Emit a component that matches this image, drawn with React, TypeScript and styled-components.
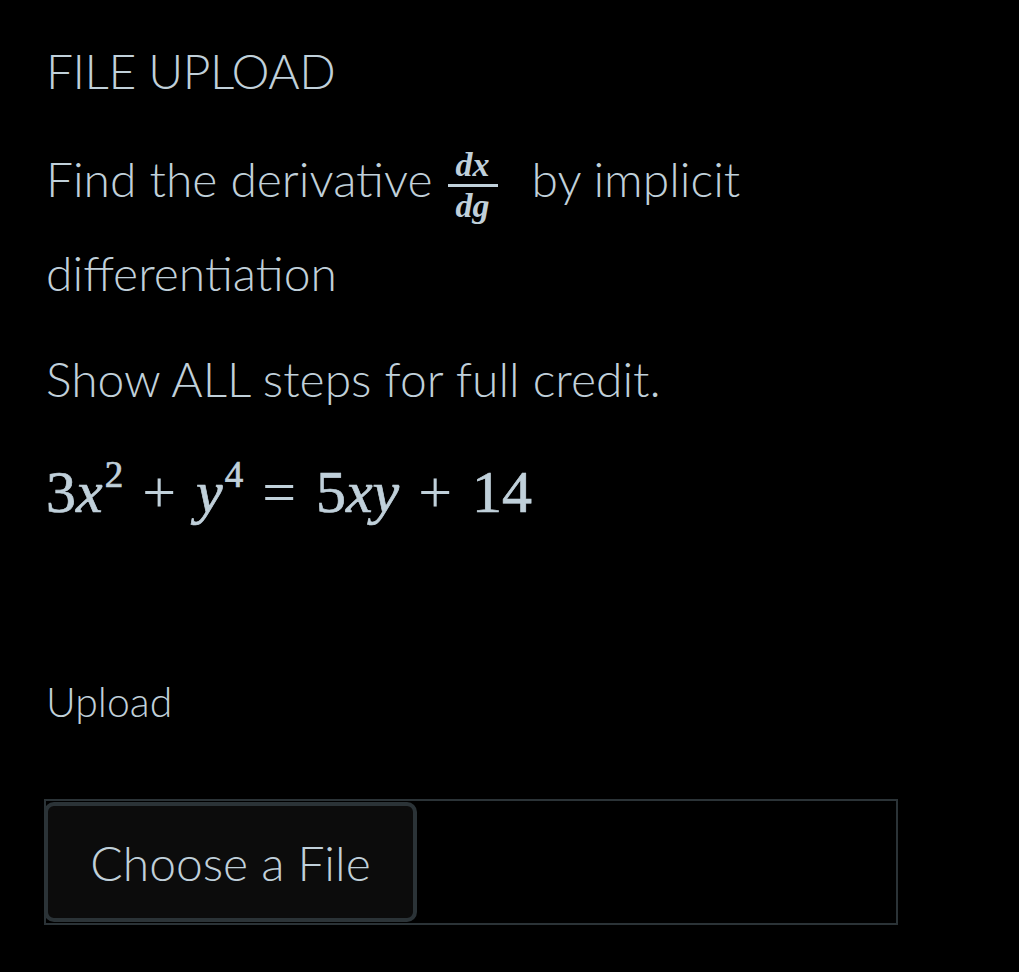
import styled, { createGlobalStyle } from "styled-components";

const GlobalStyle = createGlobalStyle`
  html, body {
    margin: 0;
    background: #000;
  }
  body {
    font-family: "Lato Light", "Lato", "Noto Sans", sans-serif;
    font-weight: 300;
    color: #c0d0da;
  }
`;

const Page = styled.div`
  width: 1019px;
  min-height: 972px;
  padding: 38px 0 0 46px;
  box-sizing: border-box;
`;

const Heading = styled.h2`
  margin: 0;
  font-size: 48px;
  font-weight: 300;
  line-height: 66px;
  letter-spacing: -0.5px;
`;

const Para = styled.p<{ $top: number }>`
  margin: ${(p) => p.$top}px 0 0;
  font-size: 48px;
  line-height: 94px;
`;

const Frac = styled.span`
  display: inline-flex;
  flex-direction: column;
  align-items: center;
  vertical-align: middle;
  margin: 0 34px 0 15px;
  font-family: "Liberation Serif", "DejaVu Serif", serif;
  font-style: italic;
  font-weight: 700;
  font-size: 34px;
  line-height: 30px;
`;

const Num = styled.span`
  width: 50px;
  text-align: center;
  padding-bottom: 4px;
  border-bottom: 3px solid #c0d0da;
`;

const Den = styled.span`
  padding-top: 4px;
`;

const Equation = styled.div`
  margin-top: 31px;
  font-family: "Liberation Serif", "DejaVu Serif", serif;
  font-size: 60px;
  font-weight: 400;
  line-height: 70px;
  height: 70px;
  color: #c0d0da;
  white-space: nowrap;
  -webkit-text-stroke: 0.7px #c0d0da;
`;

const V = styled.i`
  font-style: italic;
`;

const Sup = styled.sup`
  font-size: 37px;
  vertical-align: 25px;
  line-height: 0;
  margin-left: 2px;
`;

const Op = styled.span`
  margin: 0 20px 0 19px;
  -webkit-text-stroke: 0;
`;

const Label = styled.div`
  margin-top: 150px;
  font-size: 41px;
  line-height: 50px;
`;

const Picker = styled.div`
  margin-top: 72px;
  margin-left: -2px;
  width: 854px;
  height: 126px;
  display: flex;
  align-items: stretch;
  box-sizing: border-box;
  border: 2px solid #2b3337;
`;

const ChooseButton = styled.button`
  margin: 1px 0 1px -2px;
  width: 373px;
  background: #0c0c0c;
  border: 4px solid #2b3337;
  border-radius: 10px;
  color: #c0d0da;
  font-family: "Lato Light", "Lato", sans-serif;
  font-weight: 300;
  font-size: 48px;
  padding: 0;
  cursor: pointer;
`;

export default function App() {
  return (
    <>
      <GlobalStyle />
      <Page>
        <Heading>FILE UPLOAD</Heading>
        <Para $top={28}>
          Find the derivative
          <Frac>
            <Num>dx</Num>
            <Den>dg</Den>
          </Frac>
          by implicit
          <br />
          differentiation
        </Para>
        <Para $top={12}>Show ALL steps for full credit.</Para>
        <Equation>
          3<V>x</V>
          <Sup>2</Sup>
          <Op>+</Op>
          <V>y</V>
          <Sup>4</Sup>
          <Op>=</Op>5<V>xy</V>
          <Op>+</Op>14
        </Equation>
        <Label>Upload</Label>
        <Picker>
          <ChooseButton>Choose a File</ChooseButton>
        </Picker>
      </Page>
    </>
  );
}
